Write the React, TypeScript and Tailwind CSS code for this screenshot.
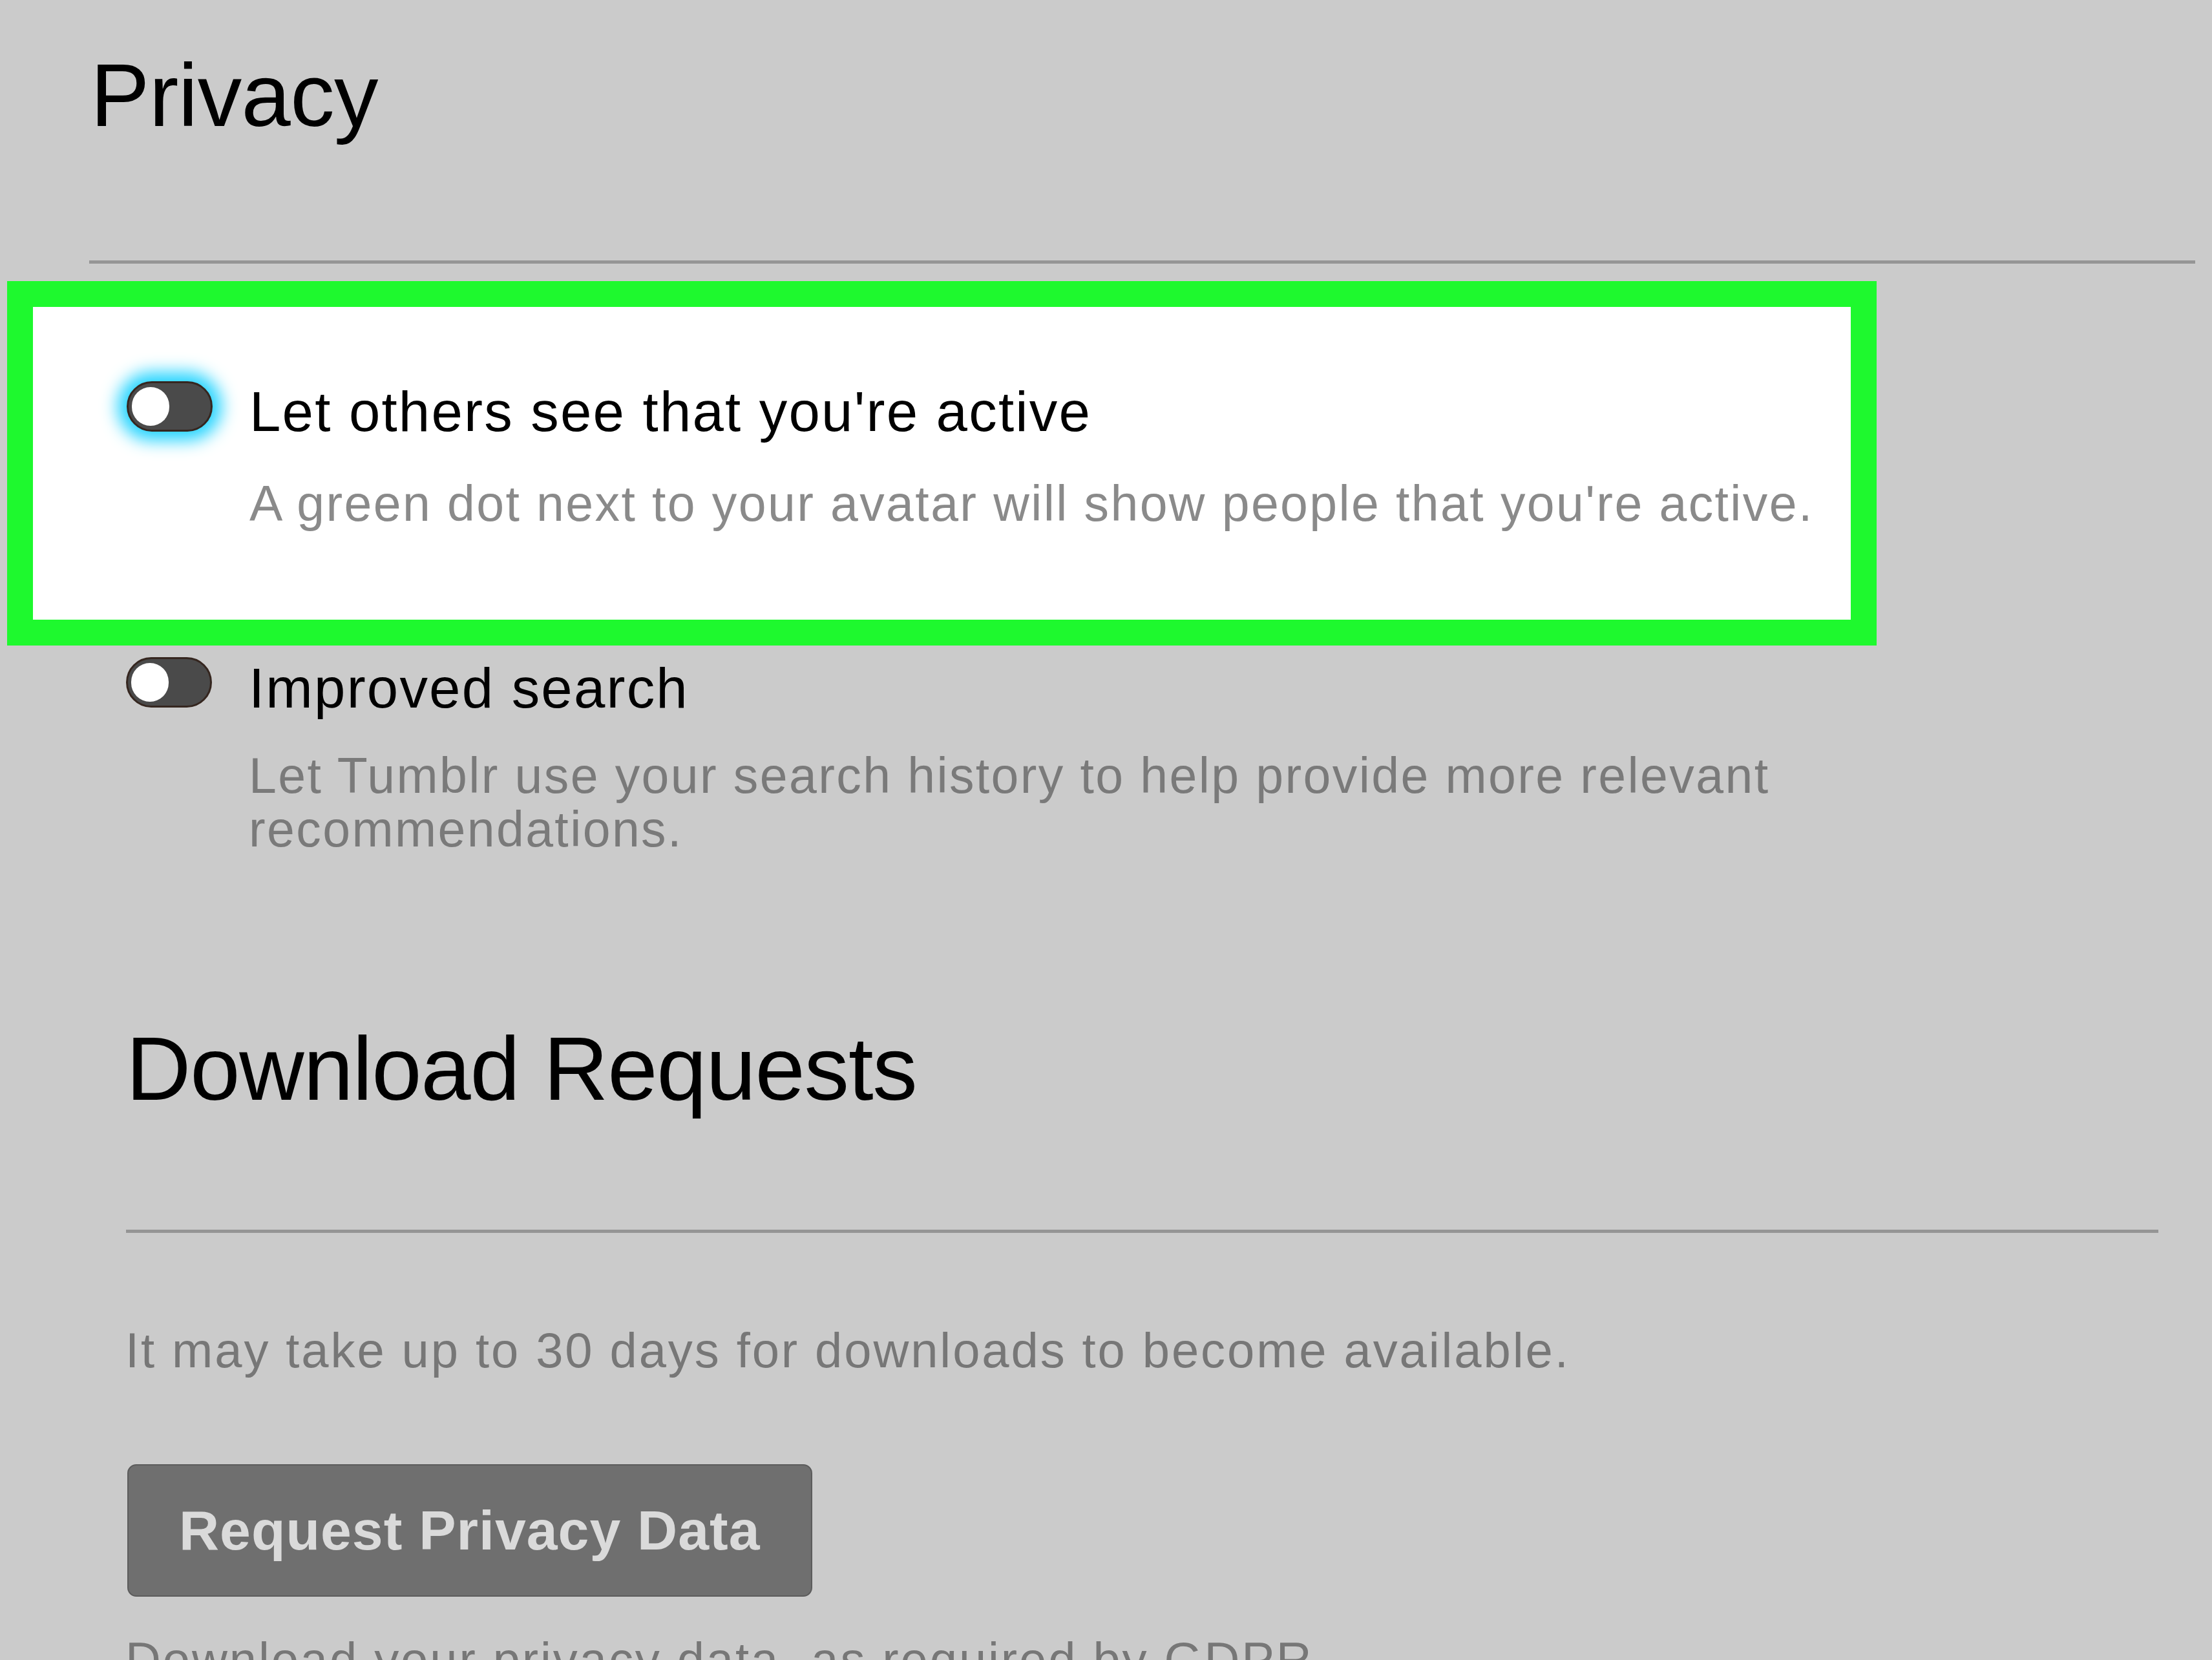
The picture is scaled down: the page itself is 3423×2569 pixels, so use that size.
import React from 'react'

interface ToggleProps {
    glow?: boolean
}

function Toggle({ glow }: ToggleProps) {
    return (
        <div
            className={`shrink-0 w-[133px] h-[78px] rounded-full bg-[#4a4a4a] border-[3px] border-[#35261f] flex items-center pl-[5px]
                ${glow ? 'shadow-[0_0_26px_14px_#25d4ff]' : ''}`}
        >
            <div className="w-[58px] h-[60px] rounded-full bg-white" />
        </div>
    )
}

interface SettingProps {
    title: string
    description: string
    glow?: boolean
    titleOffset: string
    descOffset: string
    descColor: string
}

function Setting({ title, description, glow, titleOffset, descOffset, descColor }: SettingProps) {
    return (
        <div className="flex items-start gap-[57px]">
            <Toggle glow={glow} />
            <div className={`flex flex-col ${titleOffset}`}>
                <h3 className="text-[87px] leading-[87px] text-black tracking-[2.2px]">{title}</h3>
                <p className={`w-[2520px] text-[77px] leading-[83px] tracking-[2.4px] ${descOffset} ${descColor}`}>{description}</p>
            </div>
        </div>
    )
}

export default function App() {
    return (
        <div className="w-[3423px] h-[2569px] overflow-hidden bg-[#cbcbcb] flex flex-col font-['Liberation_Sans',Arial,sans-serif]">
            <h1 className="shrink-0 ml-[140px] mt-[79px] text-[137px] leading-[137px] tracking-[-0.6px] text-black">Privacy</h1>
            <div className="shrink-0 ml-[138px] mt-[187px] w-[3259px] h-[5px] bg-[#959595]" />

            <section className="shrink-0 ml-[11px] mt-[27px] w-[2893px] h-[564px] border-[40px] border-[#1ef92e] bg-white pl-[145px] pt-[115px]">
                <Setting
                    glow
                    title="Let others see that you're active"
                    description="A green dot next to your avatar will show people that you're active."
                    titleOffset="mt-[3px]"
                    descOffset="mt-[58px]"
                    descColor="text-[#8a8a8a]"
                />
            </section>

            <div className="shrink-0 ml-[195px] mt-[18px]">
                <Setting
                    title="Improved search"
                    description="Let Tumblr use your search history to help provide more relevant recommendations."
                    titleOffset="mt-[4px]"
                    descOffset="mt-[51px]"
                    descColor="text-[#7a7a7a]"
                />
            </div>

            <h2 className="shrink-0 ml-[195px] mt-[259px] text-[139px] leading-[139px] tracking-[-1.2px] text-black">Download Requests</h2>
            <div className="shrink-0 ml-[195px] mt-[180px] w-[3145px] h-[5px] bg-[#959595]" />

            <p className="shrink-0 ml-[194px] mt-[140px] text-[76px] leading-[83px] tracking-[2.9px] text-[#777777]">
                It may take up to 30 days for downloads to become available.
            </p>

            <button className="shrink-0 ml-[197px] mt-[135px] w-[1060px] h-[205px] rounded-[14px] bg-[#6f6f6f] border-2 border-[#5c5c5c] flex items-center pl-[78px] text-[86px] font-bold text-[#dadada] tracking-[1px]">
                Request Privacy Data
            </button>

            <p className="shrink-0 ml-[194px] mt-[56px] text-[76px] leading-[83px] tracking-[2.9px] text-[#777777]">
                Download your privacy data, as required by GDPR.
            </p>
        </div>
    )
}
